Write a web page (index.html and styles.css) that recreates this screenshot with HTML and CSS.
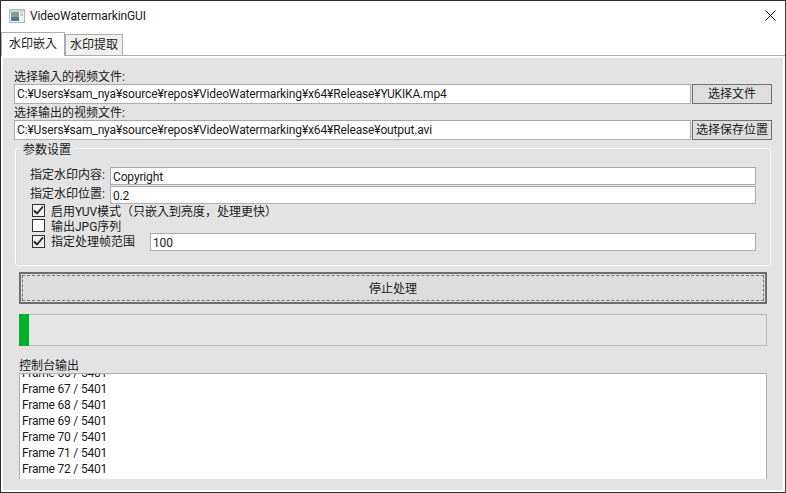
FILE: index.html
```html
<!DOCTYPE html>
<html lang="ja">
<head>
    <meta charset="UTF-8">
    <title>VideoWatermarkinGUI</title>
    <link rel="stylesheet" href="styles.css">
</head>
<body>
    <div class="window">
        <!-- Title bar -->
        <div class="titlebar">
            <svg class="app-icon" width="16" height="14" viewBox="0 0 16 14">
                <rect x="0.5" y="0.5" width="15" height="13" fill="#f2f2f2" stroke="#b4b4b4"/>
                <rect x="1" y="1" width="14" height="2" fill="#d4d8dc"/>
                <rect x="2" y="3" width="8" height="9" fill="#7fa09a"/>
                <rect x="2" y="8" width="8" height="4" fill="#4f7a86"/>
                <rect x="11" y="4" width="3" height="3" fill="#c8ccd0"/>
            </svg>
            <span class="title-text">VideoWatermarkinGUI</span>
            <svg class="close-icon" width="11" height="11" viewBox="0 0 11 11">
                <path d="M0.5 0.5L10.5 10.5M10.5 0.5L0.5 10.5" stroke="#111" stroke-width="1" fill="none"/>
            </svg>
        </div>

        <!-- Tabs -->
        <div class="tabs">
            <div class="tab active">水印嵌入</div>
            <div class="tab">水印提取</div>
        </div>

        <!-- Embed page -->
        <div class="pane">
            <div class="file-block">
                <label class="file-label">选择输入的视频文件:</label>
                <div class="file-row">
                    <div class="input grow">C:¥Users¥sam_nya¥source¥repos¥VideoWatermarking¥x64¥Release¥YUKIKA.mp4</div>
                    <div class="btn file-btn">选择文件</div>
                </div>
            </div>
            <div class="file-block">
                <label class="file-label">选择输出的视频文件:</label>
                <div class="file-row">
                    <div class="input grow">C:¥Users¥sam_nya¥source¥repos¥VideoWatermarking¥x64¥Release¥output.avi</div>
                    <div class="btn file-btn">选择保存位置</div>
                </div>
            </div>

            <div class="group">
                <span class="group-title">参数设置</span>
                <div class="param-row">
                    <span class="param-label">指定水印内容:</span>
                    <div class="input grow">Copyright</div>
                </div>
                <div class="param-row">
                    <span class="param-label">指定水印位置:</span>
                    <div class="input grow">0.2</div>
                </div>
                <div class="check-row first-check">
                    <span class="check on"><svg width="11" height="11" viewBox="0 0 11 11"><path d="M1 5.5L4 8.5L10 1.5" stroke="#222" stroke-width="1.8" fill="none"/></svg></span>
                    <span>启用YUV模式（只嵌入到亮度，处理更快）</span>
                </div>
                <div class="check-row second-check">
                    <span class="check"></span>
                    <span>输出JPG序列</span>
                </div>
                <div class="check-row range-row">
                    <span class="check on"><svg width="11" height="11" viewBox="0 0 11 11"><path d="M1 5.5L4 8.5L10 1.5" stroke="#222" stroke-width="1.8" fill="none"/></svg></span>
                    <span class="range-label">指定处理帧范围</span>
                    <div class="input grow">100</div>
                </div>
            </div>

            <div class="btn stop-btn"><span class="focus-ring">停止处理</span></div>

            <div class="progress"><div class="progress-fill" style="width: 10px"></div></div>

            <div class="console-label">控制台输出</div>
            <div class="console">
                <div class="console-lines">
                    <div>Frame 66 / 5401</div>
                    <div>Frame 67 / 5401</div>
                    <div>Frame 68 / 5401</div>
                    <div>Frame 69 / 5401</div>
                    <div>Frame 70 / 5401</div>
                    <div>Frame 71 / 5401</div>
                    <div>Frame 72 / 5401</div>
                </div>
            </div>
        </div>
    </div>
</body>
</html>
```
FILE: styles.css
```css
* {
    box-sizing: border-box;
    margin: 0;
    padding: 0;
}

body {
    width: 786px;
    height: 493px;
    overflow: hidden;
    background-color: #333;
    font-family: Roboto, 'Noto Sans CJK JP', sans-serif;
    font-size: 12px;
    color: #1a1a1a;
}

.window {
    width: 786px;
    height: 493px;
    background-color: #fff;
    border: 1px solid #2e2e2e;
    border-right-color: #3a3a3a;
    display: flex;
    flex-direction: column;
}

.titlebar {
    height: 31px;
    flex-shrink: 0;
    display: flex;
    align-items: center;
    padding: 0 9px 2px 8px;
}

.app-icon {
    margin-right: 5px;
}

.title-text {
    flex: 1;
    font-size: 12px;
    letter-spacing: -0.1px;
}

.tabs {
    height: 23px;
    flex-shrink: 0;
    display: flex;
    align-items: flex-end;
    padding-left: 0;
    position: relative;
    z-index: 1;
}

.tab {
    height: 21px;
    width: 58px;
    margin-left: -1px;
    background-color: #f0f0f0;
    border: 1px solid #acacac;
    border-bottom: none;
    text-align: center;
    line-height: 20px;
}

.tab.active {
    height: 24px;
    width: 64px;
    margin-left: 0;
    margin-bottom: -1px;
    background-color: #fff;
    line-height: 23px;
}

.tab.active + .tab {
    margin-left: 0;
}

.pane {
    flex: 1;
    min-height: 0;
    overflow: hidden;
    background-color: #e3e3e3;
    border-top: 1px solid #acacac;
    box-shadow: inset 2px 0 0 #fff, inset -2px 0 0 #fff, inset 0 2px 0 #fff, inset 0 -2px 0 #fff;
    display: flex;
    flex-direction: column;
    padding: 15px 13px 13px 13px;
}

.file-block {
    display: flex;
    flex-direction: column;
}

.file-label {
    height: 13px;
    line-height: 13px;
}

.file-block + .file-block {
    margin-top: 3px;
}

.file-row {
    display: flex;
    height: 20px;
}

.input {
    background-color: #fff;
    border: 1px solid #abadb3;
    border-top-color: #a8a8a8;
    padding-left: 2px;
    line-height: 18px;
    letter-spacing: -0.15px;
    white-space: nowrap;
    overflow: hidden;
}

.grow {
    flex: 1;
    min-width: 0;
}

.btn {
    background-color: #dedede;
    border: 1px solid #707070;
    text-align: center;
}

.file-btn {
    width: 80px;
    margin-left: 1px;
    line-height: 18px;
}

.group {
    position: relative;
    height: 118px;
    margin: 8px 1px 0 1px;
    border: 1px solid #fbfbfb;
    border-radius: 3px;
    box-shadow: 0 0 0 1px #dcdcdc inset;
    padding: 18px 14px 0 14px;
    display: flex;
    flex-direction: column;
}

.group-title {
    position: absolute;
    top: -6px;
    left: 4px;
    padding: 0 3px;
    background-color: #e3e3e3;
    line-height: 14px;
}

.param-row {
    display: flex;
    height: 18px;
    align-items: stretch;
    margin-bottom: 1px;
}

.param-label {
    width: 80px;
    line-height: 17px;
}

.param-row .input {
    line-height: 18px;
}

.check-row {
    display: flex;
    align-items: center;
    height: 14px;
    padding-left: 2px;
}

.check-row span + span {
    margin-left: 6px;
}

.first-check {
    margin-top: -2px;
}

.second-check {
    margin-top: 1px;
}

.check {
    width: 13px;
    height: 13px;
    flex-shrink: 0;
    background-color: #fff;
    border: 1px solid #333;
    display: flex;
    align-items: center;
    justify-content: center;
}

.check.on {
    background-color: #efefef;
}

.range-row {
    height: 18px;
    margin-top: 1px;
}

.range-row .check {
    margin-top: -2px;
}

.range-row .input {
    height: 18px;
    line-height: 18px;
}

.range-label {
    width: 99px;
    flex-shrink: 0;
    margin-top: -3px;
}

.stop-btn {
    height: 32px;
    flex-shrink: 0;
    margin: 6px 5px 0 5px;
    padding: 1px;
    border-width: 2px;
    border-color: #6e6e6e;
    background-color: #dcdcdc;
}

.focus-ring {
    display: block;
    height: 100%;
    border: 1px dashed #777;
    line-height: 26px;
}

.progress {
    height: 32px;
    flex-shrink: 0;
    margin: 10px 5px 0 5px;
    background-color: #e6e6e6;
    border: 1px solid #bcbcbc;
}

.progress-fill {
    height: 32px;
    margin: -1px 0 0 -1px;
    background-color: #06b025;
}

.console-label {
    height: 14px;
    margin: 13px 5px 0 5px;
    line-height: 14px;
}

.console {
    flex: 1;
    min-height: 0;
    margin: 0 5px;
    overflow: hidden;
    background-color: #fff;
    border: 1px solid #abadb3;
    border-bottom: none;
    padding-left: 2px;
}

.console-lines {
    margin-top: -9px;
    line-height: 16px;
    letter-spacing: -0.2px;
}
```
